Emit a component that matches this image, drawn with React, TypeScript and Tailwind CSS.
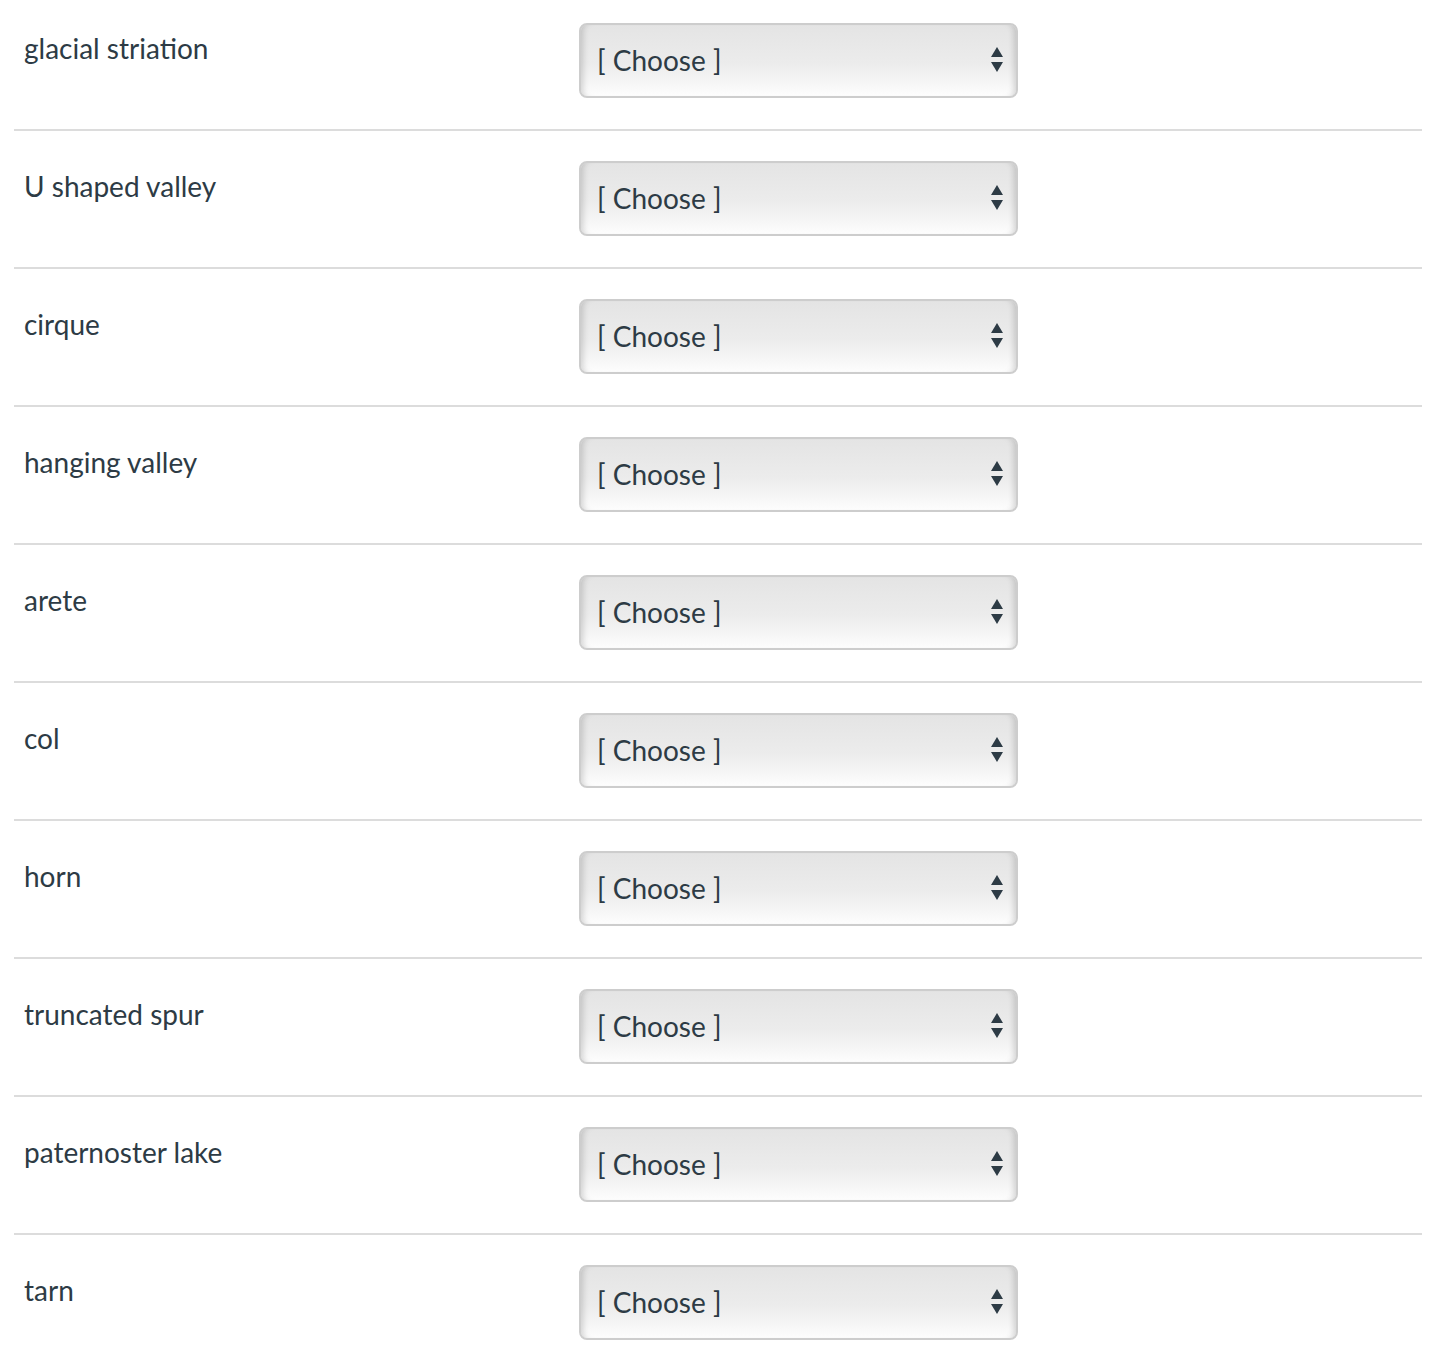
import React from 'react';

// glacial landforms matching quiz
const terms = [
    'glacial striation',
    'U shaped valley',
    'cirque',
    'hanging valley',
    'arete',
    'col',
    'horn',
    'truncated spur',
    'paternoster lake',
    'tarn',
];

function ChooseSelect({ label }: { label: string }) {
    return (
        <div className="relative w-[439px] h-[75px] shrink-0">
            <select
                aria-label={label}
                defaultValue=""
                className="appearance-none w-full h-full rounded-[8px] border-2 border-[#cdcdcd] pl-[16px] pr-10 pb-[2px] text-[28px] text-[#2d3b45] bg-linear-to-b from-[#e4e4e4] via-[#ececec] via-55% to-[#fdfdfd] shadow-[inset_7px_0_6px_-5px_rgba(0,0,0,0.16),inset_-7px_0_6px_-5px_rgba(0,0,0,0.16)] outline-none"
                style={{ fontFamily: 'Lato, "Helvetica Neue", Arial, sans-serif' }}
            >
                <option value="">[ Choose ]</option>
            </select>
            {/* up/down arrows over the select */}
            <svg
                className="absolute right-[15px] top-[24px] pointer-events-none"
                width="12"
                height="26"
                viewBox="0 0 12 26"
            >
                <path d="M6 0 L12 10 L0 10 Z" fill="#2d3b45" />
                <path d="M0 15 L12 15 L6 25 Z" fill="#2d3b45" />
            </svg>
        </div>
    );
}

export default function App() {
    return (
        <div
            className="bg-white min-h-screen text-[#2d3b45]"
            style={{ fontFamily: 'Lato, "Helvetica Neue", Arial, sans-serif' }}
        >
            <div className="ml-[14px] mr-[16px]">
                {terms.map((t, i) => (
                    <div
                        key={t}
                        className={`flex items-start pb-[31px] ${i === 0 ? 'pt-[23px]' : 'pt-[30px]'} ${
                            i < terms.length - 1 ? 'border-b-2 border-[#dcdcdc]' : ''
                        }`}
                    >
                        <div className="w-[565px] shrink-0 pl-[10px] pt-[8px] text-[28px] leading-[34px]">{t}</div>
                        <ChooseSelect label={t} />
                    </div>
                ))}
            </div>
        </div>
    );
}
